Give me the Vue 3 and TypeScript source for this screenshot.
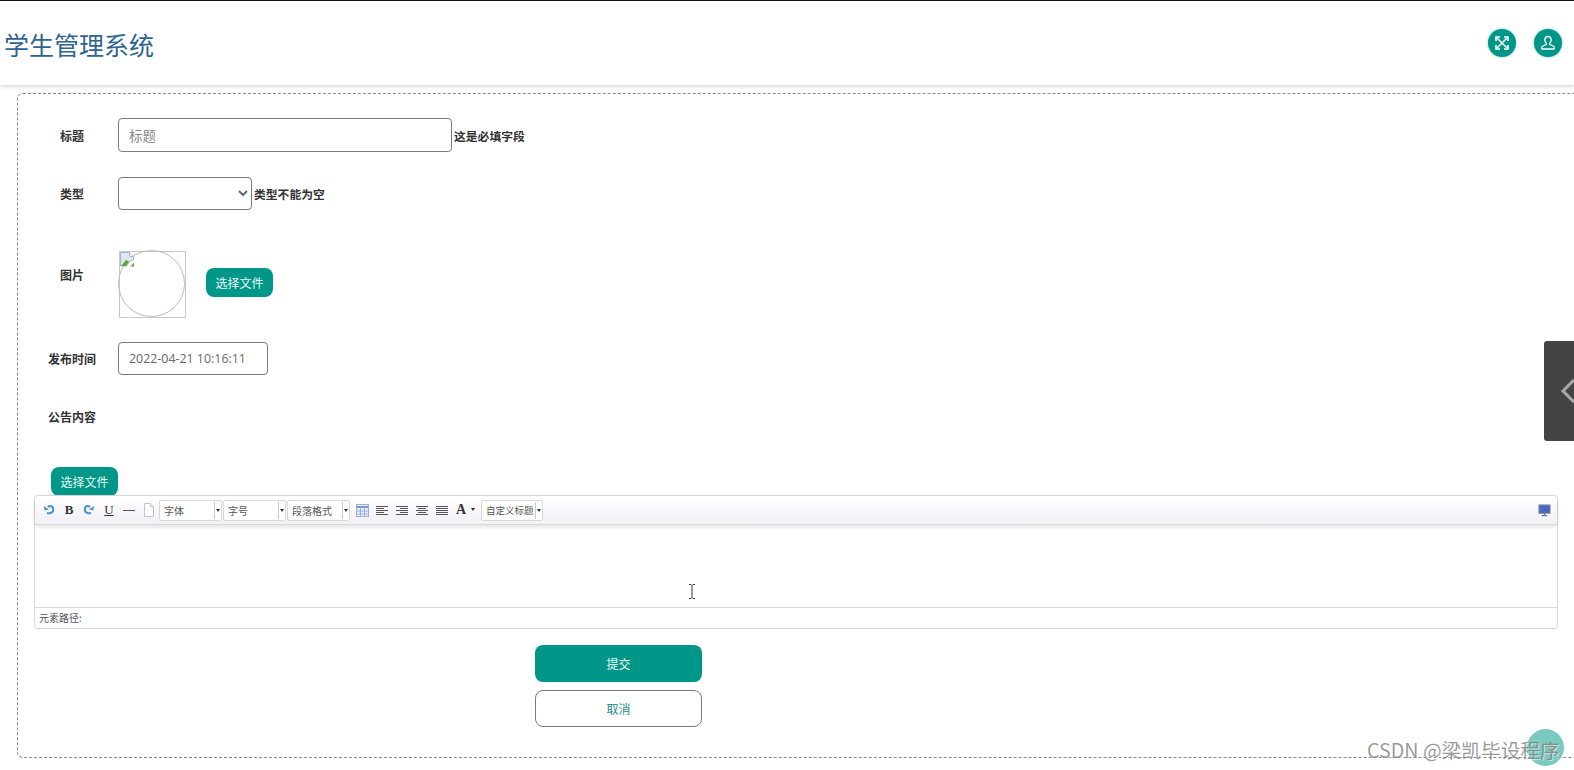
<script setup lang="ts">
const fontSelects = ['字体', '字号', '段落格式']
const alignIcons = [
  { align: 'flex-start', lines: [12, 8, 12, 8, 12] },
  { align: 'flex-end', lines: [12, 8, 12, 8, 12] },
  { align: 'center', lines: [12, 8, 12, 8, 12] },
  { align: 'stretch', lines: [12, 12, 12, 12, 12] },
]
</script>

<template>
  <div class="page">
    <header class="topbar">
      <h1 class="brand">学生管理系统</h1>
      <div class="top-actions">
        <span class="round-btn">
          <svg width="16" height="16" viewBox="0 0 16 16" fill="none" stroke="#fff" stroke-width="1.5">
            <path d="M3 3l10 10M13 3L3 13" />
            <path d="M2 6V2h4M10 2h4v4M14 10v4h-4M6 14H2v-4" stroke-width="1.6" />
          </svg>
        </span>
        <span class="round-btn">
          <svg width="18" height="18" viewBox="0 0 18 18" fill="none" stroke="#fff" stroke-width="1.3">
            <path d="M9 2.500c-2 0-3.200 1.500-3.200 3.400 0 1.500.7 2.600 1.500 3.400v1.200c-1.500.6-3.400 1.300-4.300 2.200-.5.5-.5 2.300 0 2.300h12c.5 0 .5-1.800 0-2.300-.9-.9-2.800-1.600-4.300-2.200V9.300c.8-.8 1.500-1.900 1.500-3.400C12.200 4 11 2.500 9 2.500z" />
          </svg>
        </span>
      </div>
    </header>

    <main class="frame">
      <div class="row">
        <label class="field-label">标题</label>
        <input class="text-input title-input" placeholder="标题" />
        <span class="hint">这是必填字段</span>
      </div>

      <div class="row row-type">
        <label class="field-label">类型</label>
        <select class="text-input type-select"></select>
        <span class="hint">类型不能为空</span>
      </div>

      <div class="row row-image">
        <label class="field-label image-label">图片</label>
        <div class="avatar">
          <div class="avatar-circle"></div>
          <svg class="broken" width="15" height="15" viewBox="0 0 15 15">
            <path d="M.5.5h9l4 4v3l-4 2-3 4.500H.5z" fill="#dfe6f2" stroke="#a9b4c6" />
            <path d="M1 14l5-6 3 1.500L6 14z" fill="#5fa83f" />
            <path d="M10.500 14.500h3.500v-4z" fill="#5fa83f" />
            <path d="M9.500.5v4h4" fill="#fff" stroke="#a9b4c6" />
          </svg>
        </div>
        <button class="pick-btn image-pick">选择文件</button>
      </div>

      <div class="row row-date">
        <label class="field-label">发布时间</label>
        <input class="text-input date-input" value="2022-04-21 10:16:11" />
      </div>

      <div class="row row-content">
        <label class="field-label">公告内容</label>
      </div>

      <button class="pick-btn content-pick">选择文件</button>

      <section class="editor">
        <div class="toolbar">
          <span class="tool">
            <svg width="14" height="14" viewBox="0 0 14 14" fill="none" stroke="#4a95d6" stroke-width="2.200">
              <path d="M5 10c4 1 7-1 6-5-.6-2-3.500-2.500-5-1" />
              <path d="M2 3l.5 4.500L7 6.500z" fill="#4a95d6" stroke="none" />
            </svg>
          </span>
          <span class="tool tool-b">B</span>
          <span class="tool">
            <svg width="14" height="14" viewBox="0 0 14 14" fill="none" stroke="#4a95d6" stroke-width="2.200">
              <path d="M9 10C5 11 2 9 3 5c.6-2 3.500-2.500 5-1" />
              <path d="M12 3l-.5 4.500L7 6.500z" fill="#4a95d6" stroke="none" />
            </svg>
          </span>
          <span class="tool tool-u">U</span>
          <span class="tool"><i class="hr-line"></i></span>
          <span class="tool">
            <svg width="14" height="14" viewBox="0 0 14 14" fill="#fff" stroke="#c4c4c4">
              <path d="M2.500.5h6l3 3v10h-9z" />
              <path d="M8.500.5v3h3" />
            </svg>
          </span>

          <span v-for="name in fontSelects" :key="name" class="combo">
            <span class="combo-text">{{ name }}</span>
            <i class="combo-sep"></i>
            <i class="caret"></i>
          </span>

          <span class="tool table-tool">
            <svg width="13" height="13" viewBox="0 0 13 13">
              <rect x=".5" y=".5" width="12" height="12" fill="#e6ecf8" stroke="#9db0da" />
              <path d="M.5 3h12" stroke="#7d95cc" stroke-width="2" />
              <path d="M.5 7h12M.5 10h12M4.500 3v10M8.500 3v10" stroke="#9db0da" />
            </svg>
          </span>
          <span v-for="(icon, i) in alignIcons" :key="i" class="tool">
            <span class="align-icon" :style="{ alignItems: icon.align }">
              <i v-for="(w, j) in icon.lines" :key="j" :style="{ width: w + 'px' }"></i>
            </span>
          </span>
          <span class="tool tool-a">A<i class="caret a-caret"></i></span>
          <span class="combo custom-combo">
            <span class="combo-text">自定义标题</span>
            <i class="combo-sep"></i>
            <i class="caret"></i>
          </span>

          <span class="tool fullscreen">
            <svg width="13" height="13" viewBox="0 0 14 14">
              <rect x="1" y="1" width="12" height="9" fill="#4a66c0" stroke="#7f8aa0" />
              <path d="M4 12.500h6M7 10v2" stroke="#6d7688" stroke-width="1.500" />
            </svg>
          </span>
        </div>
        <div class="editor-body"></div>
        <div class="editor-status">元素路径:</div>
      </section>

      <div class="form-actions">
        <button class="submit-btn">提交</button>
        <button class="cancel-btn">取消</button>
      </div>
    </main>

    <div class="side-tab">
      <svg width="16" height="24" viewBox="0 0 16 24" fill="none" stroke="#a8a8a8" stroke-width="3">
        <path d="M14 1L3 12l11 11" />
      </svg>
    </div>
    <div class="fab"></div>
    <div class="watermark">CSDN @梁凯毕设程序</div>
    <svg class="ibeam" width="8" height="15" viewBox="0 0 8 15" fill="none" stroke="#333">
      <path d="M1 .5h2l1 1 1-1h2M4 1.500v12M1 14.500h2l1-1 1 1h2" />
    </svg>
  </div>
</template>

<style>
html,
body {
  margin: 0;
  background: #fff;
  overflow: hidden;
}
</style>

<style scoped>
.page {
  position: relative;
  width: 1574px;
  height: 770px;
  overflow: hidden;
  background: #fff;
  font-family: "Noto Sans CJK SC", "Open Sans", sans-serif;
  color: #333;
}

.topbar {
  height: 85px;
  box-sizing: border-box;
  border-top: 1px solid #111;
  display: flex;
  align-items: center;
  justify-content: space-between;
  padding: 0 12px 0 4px;
  box-shadow: 0 1px 4px rgba(0, 0, 0, 0.2);
}
.brand {
  margin: 2px 0 0;
  font-size: 25px;
  font-weight: 400;
  color: #2f6391;
}
.top-actions {
  display: flex;
  gap: 18px;
}
.round-btn {
  width: 28px;
  height: 28px;
  border-radius: 50%;
  background: #009688;
  display: flex;
  align-items: center;
  justify-content: center;
  box-shadow: 0 0 3px rgba(0, 150, 136, 0.5);
}

.frame {
  box-sizing: border-box;
  width: 1600px;
  height: 665px;
  margin: 8px 0 0 17px;
  padding: 24px 0 0 18px;
  border: 1px dashed #8a8a8a;
  border-radius: 6px;
}

.row {
  display: flex;
  align-items: center;
}
.row-type {
  margin-top: 25px;
}
.row-image {
  margin-top: 41px;
  align-items: flex-start;
}
.row-date {
  margin-top: 24px;
}
.row-content {
  margin-top: 24px;
  height: 34px;
}
.field-label {
  width: 72px;
  margin-right: 10px;
  text-align: center;
  font-size: 12px;
  font-weight: 700;
  color: #333;
  flex: none;
}
.image-label {
  margin-top: 15px;
}
.text-input {
  box-sizing: border-box;
  height: 33px;
  border: 1px solid #7b7b7b;
  border-radius: 4px;
  background: #fff;
  font-family: "Open Sans", "Noto Sans CJK SC", sans-serif;
  font-size: 12.400px;
  color: #666;
  padding: 0 10px;
  outline: none;
}
.title-input {
  width: 334px;
  height: 34px;
  font-family: "Noto Sans CJK SC", sans-serif;
  font-size: 13.500px;
}
.title-input::placeholder {
  color: #8a8a8a;
}
.type-select {
  width: 134px;
  padding: 0;
}
.date-input {
  width: 150px;
}
.hint {
  margin-left: 2px;
  font-size: 11.800px;
  font-weight: 700;
  color: #333;
}

.avatar {
  position: relative;
  box-sizing: border-box;
  width: 67px;
  height: 67px;
  margin-left: 1px;
  border: 1px solid #c8c8c8;
}
.avatar-circle {
  position: absolute;
  left: -2px;
  top: -2px;
  width: 67px;
  height: 67px;
  box-sizing: border-box;
  border: 1px solid #bcbcbc;
  border-radius: 50%;
}
.broken {
  position: absolute;
  left: 0;
  top: 0;
}
.pick-btn {
  width: 67px;
  height: 29px;
  border: 0;
  border-radius: 8px;
  background: #009688;
  color: #eafaf7;
  font-family: inherit;
  font-size: 12px;
  padding: 0;
}
.image-pick {
  margin: 17px 0 0 20px;
}
.content-pick {
  display: block;
  margin: 34px 0 0 15px;
}

.editor {
  box-sizing: border-box;
  width: 1524px;
  height: 134px;
  margin: -1px 0 0 -2px;
  border: 1px solid #d9d9d9;
  border-radius: 4px;
  display: flex;
  flex-direction: column;
}
.toolbar {
  height: 28px;
  flex: none;
  display: flex;
  align-items: center;
  padding: 0 3px 0 4px;
  background: linear-gradient(#fff, #f1f1f6);
  border-bottom: 1px solid #d9d9d9;
  box-shadow: 0 2px 4px rgba(0, 0, 0, 0.13);
  border-radius: 4px 4px 0 0;
}
.tool {
  width: 20px;
  height: 20px;
  flex: none;
  display: flex;
  align-items: center;
  justify-content: center;
}
.tool-b {
  font: 700 13px "Liberation Serif", serif;
  color: #333;
}
.tool-u {
  font: 400 13px "Liberation Serif", serif;
  color: #333;
  text-decoration: underline;
}
.hr-line {
  width: 12px;
  height: 1px;
  background: #555;
}
.combo {
  position: relative;
  box-sizing: border-box;
  width: 63px;
  height: 21px;
  flex: none;
  margin-right: 1px;
  background: #fff;
  border: 1px solid #d9d9d9;
  border-radius: 2px;
  display: flex;
  align-items: center;
  padding-left: 4px;
  font-size: 10px;
  color: #555;
}
.combo-text {
  width: 48px;
  white-space: nowrap;
}
.combo-sep {
  position: absolute;
  right: 6px;
  top: 1px;
  width: 1px;
  height: 17px;
  background: #c9c9c9;
}
.caret {
  position: absolute;
  right: 1px;
  top: 8px;
  border-left: 2px solid transparent;
  border-right: 2px solid transparent;
  border-top: 3px solid #333;
}
.table-tool {
  margin-left: 1px;
}
.align-icon {
  width: 12px;
  display: flex;
  flex-direction: column;
  gap: 1px;
}
.align-icon i {
  height: 1px;
  background: #555;
}
.tool-a {
  position: relative;
  width: 29px;
  justify-content: flex-start;
  padding-left: 4px;
  box-sizing: border-box;
  font: 700 14px "Liberation Serif", serif;
  color: #333;
}
.a-caret {
  right: 6px;
}
.custom-combo {
  width: 62px;
  font-size: 9.500px;
}
.fullscreen {
  margin-left: auto;
  margin-right: 0;
}
.editor-body {
  flex: 1;
}
.editor-status {
  height: 21px;
  flex: none;
  box-sizing: border-box;
  border-top: 1px solid #d9d9d9;
  padding-left: 4px;
  font-size: 10px;
  line-height: 20px;
  color: #555;
}

.form-actions {
  width: 167px;
  margin: 16px 0 0 499px;
  display: flex;
  flex-direction: column;
  gap: 8px;
}
.submit-btn,
.cancel-btn {
  height: 37px;
  border-radius: 8px;
  font-family: inherit;
  font-size: 12px;
  padding: 0;
}
.submit-btn {
  border: 0;
  background: #009688;
  color: #eafaf7;
}
.cancel-btn {
  border: 1px solid #7b7b7b;
  background: #fff;
  color: #1d8a7e;
}

.side-tab {
  position: absolute;
  left: 1544px;
  top: 341px;
  width: 40px;
  height: 100px;
  background: #444;
  border-radius: 3px;
  display: flex;
  align-items: center;
  padding-left: 16px;
  box-sizing: border-box;
}
.fab {
  position: absolute;
  left: 1527px;
  top: 729px;
  width: 37px;
  height: 37px;
  border-radius: 50%;
  background: #7bc9bf;
}
.watermark {
  position: absolute;
  left: 1367px;
  top: 736px;
  font-size: 19.700px;
  line-height: 28px;
  color: rgba(120, 120, 120, 0.75);
  text-shadow: 1px 1px 1px rgba(255, 255, 255, 0.6);
  white-space: nowrap;
}
.ibeam {
  position: absolute;
  left: 688px;
  top: 584px;
}
</style>
